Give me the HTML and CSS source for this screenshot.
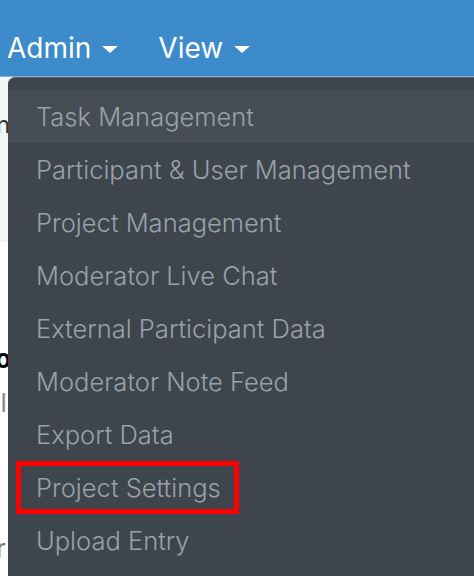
FILE: index.html
```html
<!DOCTYPE html>
<html lang="en">
<head>
    <meta charset="UTF-8">
    <meta name="viewport" content="width=device-width, initial-scale=1.0">
    <title>Admin menu</title>
    <link rel="stylesheet" href="styles.css">
</head>
<body>
    <div class="navbar">
        <span class="nav-item">Admin <span class="caret"></span></span>
        <span class="nav-item">View <span class="caret"></span></span>
    </div>

    <div class="page">
        <div class="panel">
            <p class="peek peek-n">Admin</p>
        </div>
        <div class="content">
            <p class="peek peek-o">Info</p>
            <p class="peek peek-l">tl</p>
            <p class="peek peek-r">Or</p>
        </div>

        <ul class="dropdown">
            <li class="active">Task Management</li>
            <li>Participant &amp; User Management</li>
            <li>Project Management</li>
            <li>Moderator Live Chat</li>
            <li>External Participant Data</li>
            <li>Moderator Note Feed</li>
            <li>Export Data</li>
            <li><span class="highlight">Project Settings</span></li>
            <li>Upload Entry</li>
        </ul>
    </div>
</body>
</html>
```

FILE: styles.css
```css
body {
    margin: 0;
    font-family: Inter, "Liberation Sans", Arial, sans-serif;
    background-color: #ffffff;
    overflow: hidden;
}

.navbar {
    height: 77px;
    background-color: #3d8bcb;
    display: flex;
    align-items: flex-end;
    gap: 40px;
    padding: 0 0 11px 7px;
    box-sizing: border-box;
    border-bottom: 1px solid #7fb0d8;
}

.nav-item {
    color: #ffffff;
    font-size: 28px;
    font-weight: 400;
    display: flex;
    align-items: center;
    gap: 11px;
}

.caret {
    width: 0;
    height: 0;
    border-left: 8px solid transparent;
    border-right: 8px solid transparent;
    border-top: 7px solid #ffffff;
    margin-top: 2px;
}

.page {
    position: relative;
    height: 499px;
}

.panel {
    height: 165px;
    background-color: #f3f5f7;
    padding-top: 33px;
    box-sizing: border-box;
}

.content {
    padding-top: 102px;
}

.peek {
    margin: 0;
    font-size: 26px;
    line-height: 30px;
    color: #222;
}

.peek-n {
    margin-left: -62px;
    color: #333;
    font-size: 24px;
}

.peek-o {
    margin-left: -38px;
    font-weight: bold;
    color: #000;
}

.peek-l {
    margin-left: -8px;
    margin-top: 14px;
    color: #888;
}

.peek-r {
    margin-left: -24px;
    margin-top: 116px;
    color: #777;
}

.dropdown {
    position: absolute;
    top: 0;
    left: 8px;
    right: -20px;
    bottom: -20px;
    margin: 0;
    padding: 12px 0 0;
    list-style: none;
    background-color: #3e454d;
    border-top-left-radius: 7px;
    border-top: 1px solid #5a6168;
}

.dropdown li {
    height: 53px;
    display: flex;
    align-items: center;
    padding-left: 28px;
    color: #99a1a9;
    font-size: 25.5px;
    font-weight: 300;
}

.dropdown li.active {
    background-color: #464d55;
}

.highlight {
    display: flex;
    align-items: center;
    height: 53px;
    box-sizing: border-box;
    border: 5px solid #ff0000;
    margin-left: -20px;
    padding: 0 13px 0 15px;
}
```
